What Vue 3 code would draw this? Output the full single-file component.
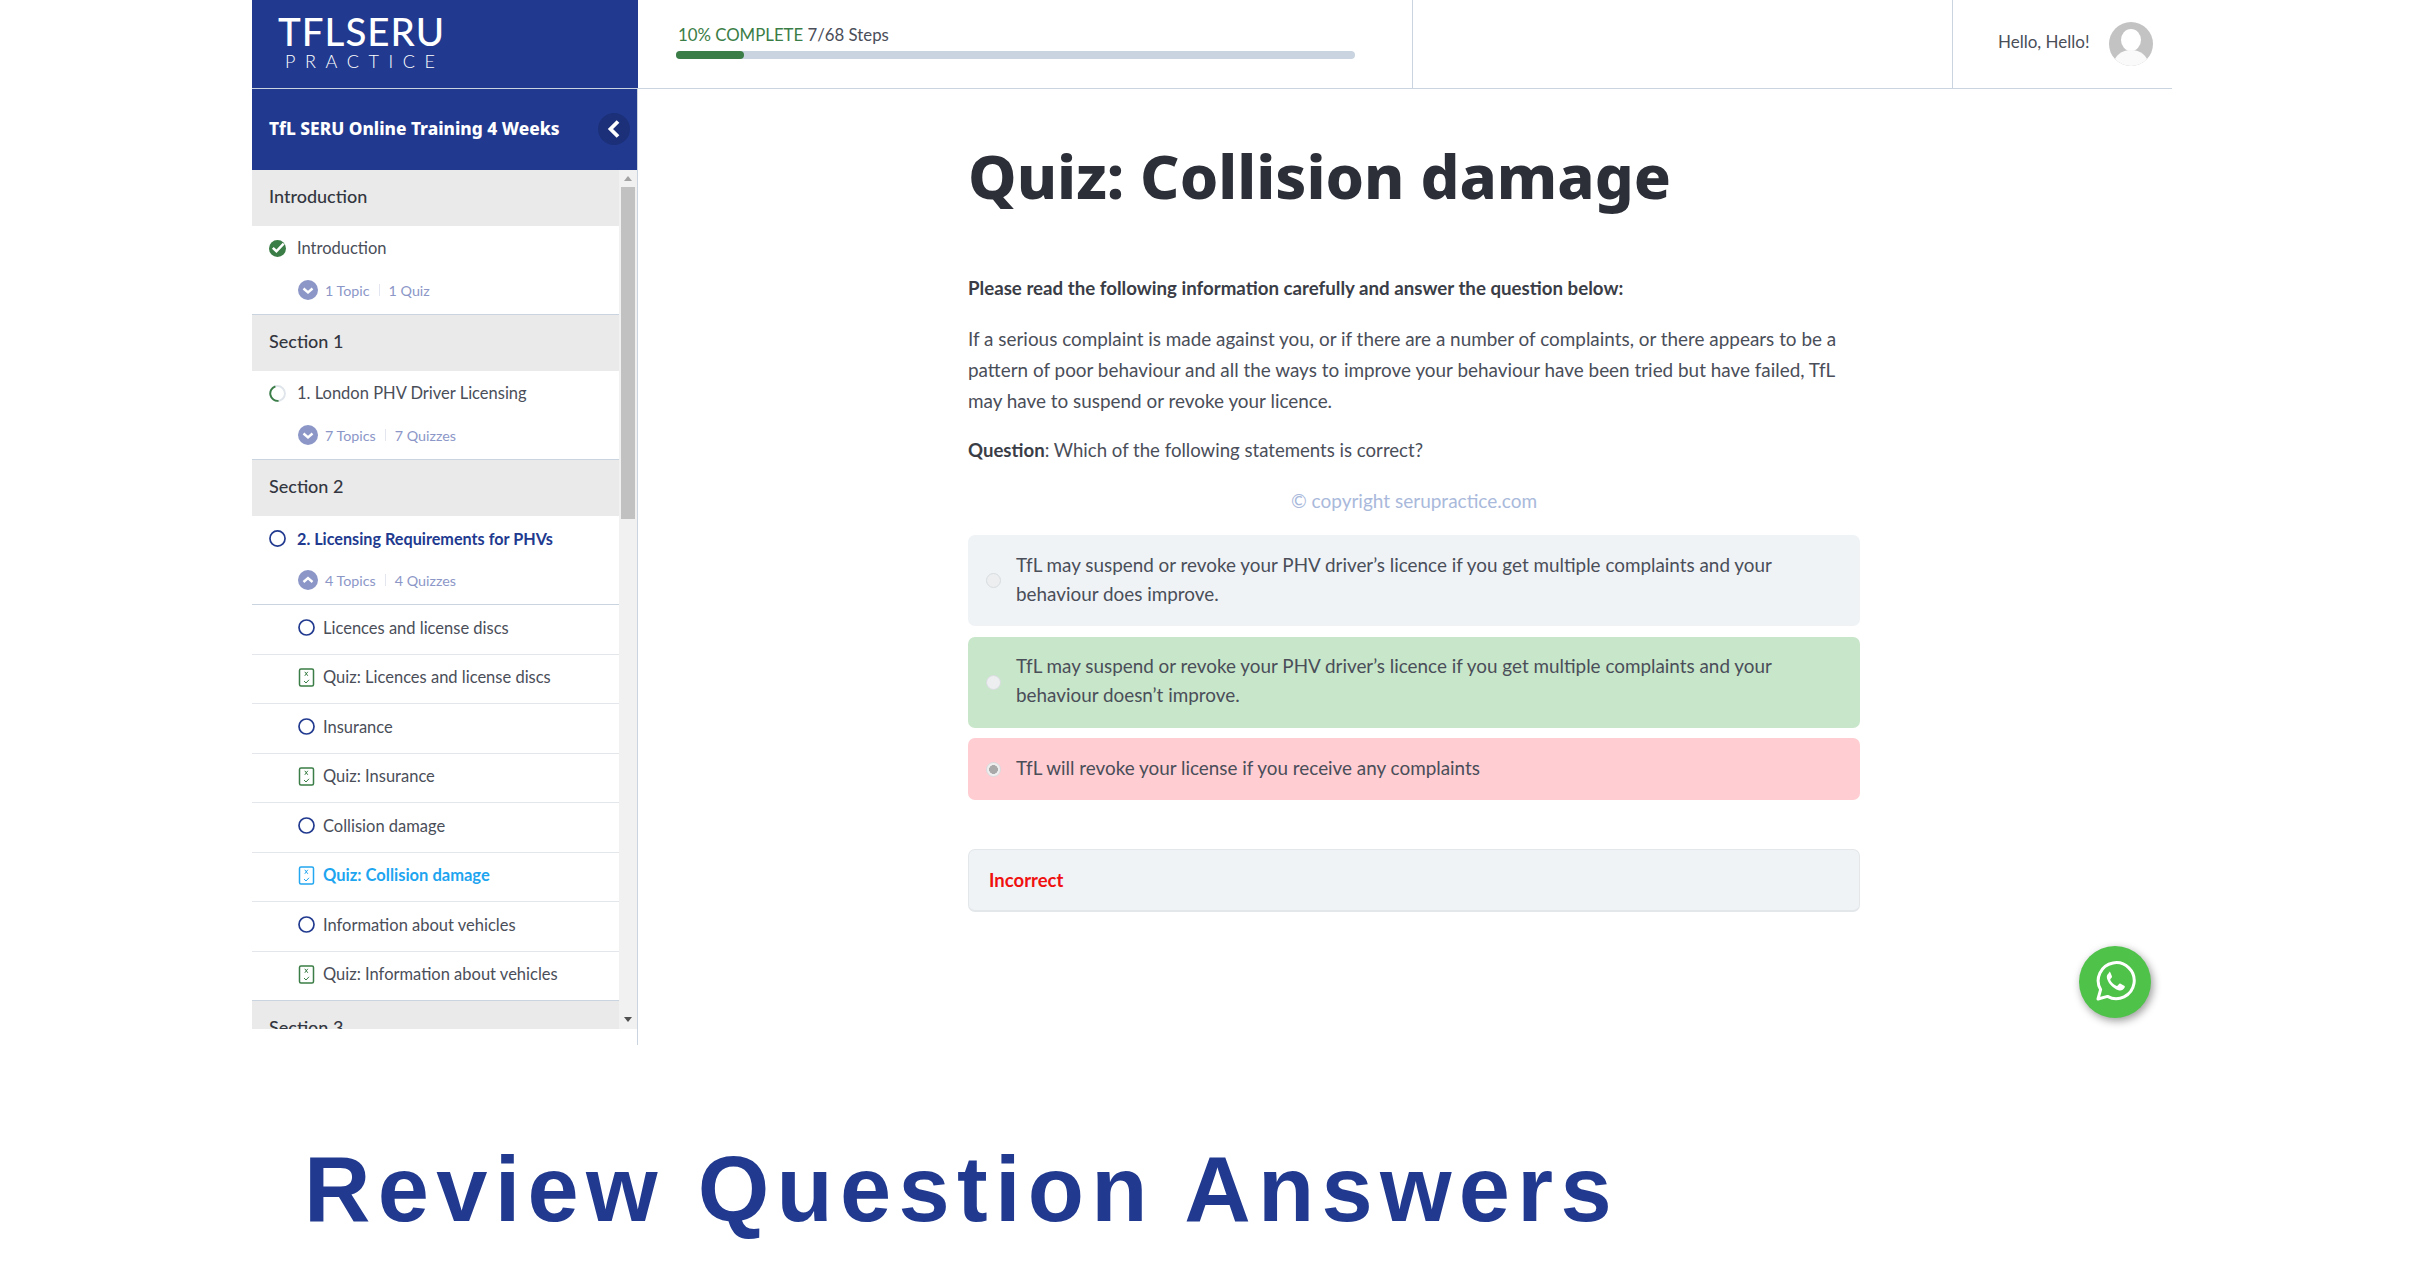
<script setup>
const sections = [
  {
    title: "Introduction",
    lessons: [{ name: "Introduction", status: "done", topics: "1 Topic", quizzes: "1 Quiz" }],
  },
  {
    title: "Section 1",
    lessons: [{ name: "1. London PHV Driver Licensing", status: "partial", topics: "7 Topics", quizzes: "7 Quizzes" }],
  },
  {
    title: "Section 2",
    lessons: [
      {
        name: "2. Licensing Requirements for PHVs",
        status: "open",
        active: true,
        topics: "4 Topics",
        quizzes: "4 Quizzes",
        items: [
          { name: "Licences and license discs", type: "topic" },
          { name: "Quiz: Licences and license discs", type: "quiz" },
          { name: "Insurance", type: "topic" },
          { name: "Quiz: Insurance", type: "quiz" },
          { name: "Collision damage", type: "topic" },
          { name: "Quiz: Collision damage", type: "quiz", current: true },
          { name: "Information about vehicles", type: "topic" },
          { name: "Quiz: Information about vehicles", type: "quiz" },
        ],
      },
    ],
  },
  { title: "Section 3", lessons: [] },
];

const answers = [
  { text: "TfL may suspend or revoke your PHV driver’s licence if you get multiple complaints and your behaviour does improve.", state: "" },
  { text: "TfL may suspend or revoke your PHV driver’s licence if you get multiple complaints and your behaviour doesn’t improve.", state: "correct" },
  { text: "TfL will revoke your license if you receive any complaints", state: "wrong" },
];
</script>

<template>
  <div class="page">
    <header class="topbar">
      <div class="logo">
        <div class="logo-main">TFLSERU</div>
        <div class="logo-sub">PRACTICE</div>
      </div>
      <div class="progress-col">
        <div class="progress-label"><span class="pct">10% COMPLETE</span> 7/68 Steps</div>
        <div class="progress-track"><div class="progress-fill"></div></div>
      </div>
      <div class="spacer-col"></div>
      <div class="user-col">
        <span class="hello">Hello, Hello!</span>
        <svg class="avatar" viewBox="0 0 44 44">
          <defs><clipPath id="av"><circle cx="22" cy="22" r="22" /></clipPath></defs>
          <g clip-path="url(#av)">
            <rect width="44" height="44" fill="#c3c3c3" />
            <ellipse cx="22" cy="18" rx="10" ry="11" fill="#fff" />
            <ellipse cx="22" cy="42" rx="17" ry="14" fill="#fafafa" />
          </g>
        </svg>
      </div>
    </header>

    <div class="body">
      <aside class="sidebar">
        <div class="side-head">
          <span>TfL SERU Online Training 4 Weeks</span>
          <span class="collapse">
            <svg width="16" height="20" viewBox="0 0 16 20"><path d="M12 2.500 4.500 10 12 17.500" fill="none" stroke="#fff" stroke-width="3.800" /></svg>
          </span>
        </div>
        <div class="side-scroll">
          <div class="side-list">
            <section v-for="s in sections" :key="s.title">
              <h3 class="sec-title">{{ s.title }}</h3>
              <div v-for="l in s.lessons" :key="l.name" class="lesson">
                <div class="lesson-row" :class="{ active: l.active }">
                  <svg v-if="l.status === 'done'" class="ico" viewBox="0 0 16 16">
                    <circle cx="8" cy="8" r="8" fill="#3b7d46" />
                    <path d="M3.600 7.400 7 10.600 13.800 3.400" fill="none" stroke="#fff" stroke-width="2.400" />
                  </svg>
                  <svg v-else-if="l.status === 'partial'" class="ico" viewBox="0 0 16 16">
                    <circle cx="8" cy="8" r="7" fill="none" stroke="#dfe5ea" stroke-width="1.800" />
                    <path d="M9 14.900A7 7 0 0 1 6 1.300" fill="none" stroke="#3b7d46" stroke-width="1.800" />
                  </svg>
                  <svg v-else class="ico" viewBox="0 0 16 16">
                    <circle cx="8" cy="8" r="7.100" fill="none" stroke="#213a8f" stroke-width="1.600" />
                  </svg>
                  <span>{{ l.name }}</span>
                </div>
                <div class="lesson-meta">
                  <svg class="chev" viewBox="0 0 20 20">
                    <circle cx="10" cy="10" r="10" fill="#8c97c8" />
                    <path :d="l.items ? 'M5.500 12 10 8l4.500 4' : 'M5.500 8.500 10 12.500l4.500-4'" fill="none" stroke="#fff" stroke-width="2.400" />
                  </svg>
                  <span>{{ l.topics }}</span>
                  <i class="sep"></i>
                  <span>{{ l.quizzes }}</span>
                </div>
                <div v-for="it in l.items" :key="it.name" class="item" :class="{ current: it.current }">
                  <svg v-if="it.type === 'topic'" class="ico-item" viewBox="0 0 17 19">
                    <circle cx="8.500" cy="9.500" r="7.500" fill="none" stroke="#213a8f" stroke-width="1.700" />
                  </svg>
                  <svg v-else class="ico-item" viewBox="0 0 17 19">
                    <rect x="1.500" y="1" width="14" height="17" rx="1.500" fill="none" :stroke="it.current ? '#22a7f0' : '#3b7d46'" stroke-width="1.500" />
                    <path d="M6.800 3.800 9.800 7.800M9.800 3.800 6.800 7.800M6 13 8 15 11 11.800" fill="none" :stroke="it.current ? '#22a7f0' : '#3b7d46'" stroke-width="1" />
                  </svg>
                  <span>{{ it.name }}</span>
                </div>
              </div>
            </section>
          </div>
          <div class="scrollbar">
            <span class="arrow up"></span>
            <div class="thumb"></div>
            <span class="arrow down"></span>
          </div>
        </div>
      </aside>

      <main class="content">
        <h1>Quiz: Collision damage</h1>
        <p class="lead">Please read the following information carefully and answer the question below:</p>
        <p class="para">If a serious complaint is made against you, or if there are a number of complaints, or there appears to be a pattern of poor behaviour and all the ways to improve your behaviour have been tried but have failed, TfL may have to suspend or revoke your licence.</p>
        <p class="question"><strong>Question</strong>: Which of the following statements is correct?</p>
        <p class="copy">© copyright serupractice.com</p>
        <ul class="answers">
          <li v-for="a in answers" :key="a.text" class="answer" :class="a.state">
            <span class="radio"></span>
            <span class="answer-text">{{ a.text }}</span>
          </li>
        </ul>
        <div class="result">Incorrect</div>
      </main>
    </div>

    <h2 class="caption">Review Question Answers</h2>

    <a class="whatsapp">
      <svg width="44" height="44" viewBox="0 0 44 44">
        <path d="M5 39 7.600 29.600A18 18 0 1 1 14.500 36.400Z" fill="none" stroke="#fff" stroke-width="3" stroke-linejoin="round" />
        <path d="M16.500 12.500c-2 1.300-3.200 3.500-2.500 6 1.400 5 6 10 11.500 11.700 2.500.800 5-.300 6-2.400.500-1 .400-1.700-.300-2.100l-3.600-1.900c-.800-.400-1.300-.200-1.800.400l-1 1.300c-.400.500-.900.600-1.500.300-2.600-1.200-4.600-3.100-5.900-5.600-.300-.600-.200-1 .200-1.400l1-1.100c.400-.500.500-1 .300-1.500l-1.500-3.600c-.400-.900-1.100-1.100-1.900-.600Z" fill="#fff" />
      </svg>
    </a>
  </div>
</template>

<style>
html, body { background: #fff; }
</style>

<style scoped>
.page {
  position: relative;
  width: 1920px;
  height: 1274px;
  margin-left: 252px;
  font-family: Lato, "Liberation Sans", sans-serif;
  color: #4a4e59;
  overflow: hidden;
}
.topbar {
  display: flex;
  height: 89px;
  border-bottom: 1px solid #c9d4e0;
  box-sizing: border-box;
}
.logo {
  width: 386px;
  background: #213a8f;
  color: #fff;
  padding: 11px 0 0 26px;
  box-sizing: border-box;
  line-height: 1;
}
.logo-main { font-size: 38.500px; font-weight: 500; letter-spacing: 1px; line-height: 40px; }
.logo-sub { font-size: 18px; letter-spacing: 9.600px; margin: 0 0 0 7px; line-height: 20px; font-weight: 300; }
.progress-col {
  width: 775px;
  padding: 24px 0 0 38px;
  box-sizing: border-box;
  border-right: 1px solid #c9d4e0;
}
.progress-label { font-size: 16.800px; line-height: 22px; margin-left: 2px; }
.pct { color: #3b7d46; }
.progress-track {
  width: 679px;
  height: 8px;
  margin-top: 5px;
  background: #c9d4e0;
  border-radius: 4px;
}
.progress-fill { width: 68px; height: 100%; background: #3b7d46; border-radius: 4px; }
.spacer-col { width: 539px; border-right: 1px solid #c9d4e0; }
.user-col {
  flex: 1;
  display: flex;
  align-items: center;
  gap: 19px;
  padding-left: 45px;
  font-size: 17px;
}
.hello { margin-bottom: 5px; }
.avatar { width: 44px; height: 44px; margin-bottom: 1px; }
.body { display: flex; height: 956px; }
.sidebar {
  width: 386px;
  box-sizing: border-box;
  border-right: 1px solid #c9d4e0;
  display: flex;
  flex-direction: column;
}
.side-head {
  height: 81px;
  flex: none;
  background: #213a8f;
  color: #fff;
  font-family: "Noto Sans", sans-serif;
  font-weight: 800;
  font-size: 17.300px;
  display: flex;
  align-items: center;
  justify-content: space-between;
  padding: 0 7px 2px 17px;
  box-sizing: border-box;
}
.collapse {
  width: 32px;
  height: 32px;
  border-radius: 50%;
  background: #1c3079;
  display: flex;
  align-items: center;
  justify-content: center;
}
.side-scroll { height: 859px; display: flex; flex: none; }
.side-list { width: 367px; overflow: hidden; }
.sec-title {
  margin: 0;
  height: 56px;
  line-height: 52px;
  background: #eaeaea;
  padding-left: 17px;
  font-size: 18px;
  font-weight: 500;
  color: #33363f;
  box-sizing: border-box;
}
.lesson-row {
  display: flex;
  align-items: center;
  height: 46px;
  padding: 0 0 2px 17px;
  box-sizing: border-box;
  font-size: 16.500px;
  gap: 11px;
}
.lesson-row.active { color: #213a8f; font-weight: 700; font-size: 16.200px; }
.ico { width: 17px; height: 17px; flex: none; }
.lesson-meta {
  display: flex;
  align-items: center;
  height: 43px;
  padding: 0 0 6px 46px;
  box-sizing: border-box;
  font-size: 14.300px;
  color: #8c97c8;
  border-bottom: 1px solid #c9d4e0;
}
.chev { width: 20px; height: 20px; margin-right: 7px; }
.sep { width: 1px; height: 12px; background: #e3e6ee; margin: 0 9px; }
.item {
  display: flex;
  align-items: center;
  height: 49.500px;
  padding: 0 0 3px 46px;
  box-sizing: border-box;
  border-bottom: 1px solid #e3e6ea;
  font-size: 16.500px;
  gap: 8px;
}
.item:last-child { border-bottom-color: #c9d4e0; }
.item.current { color: #1ea5f0; font-weight: 700; }
.ico-item { width: 17px; height: 19px; flex: none; }
.scrollbar {
  width: 18px;
  background: #f1f1f1;
  position: relative;
  display: flex;
  flex-direction: column;
  align-items: center;
  flex: none;
}
.thumb { width: 14px; height: 332px; background: #c1c1c1; margin-top: 17px; }
.arrow { position: absolute; width: 0; height: 0; border-left: 4px solid transparent; border-right: 4px solid transparent; }
.arrow.up { top: 6px; border-bottom: 5px solid #a3a3a3; }
.arrow.down { bottom: 7px; border-top: 5px solid #505050; }
.content { width: 892px; margin-left: 330px; }
h1 {
  margin: 46px 0 0;
  font-family: "Noto Sans", sans-serif;
  font-size: 61.300px;
  line-height: 80px;
  font-weight: 800;
  color: #2c2f38;
}
.lead { margin: 58px 0 0; font-size: 18.700px; font-weight: 700; line-height: 31px; color: #3a3d46; }
.para { margin: 19px 0 0; font-size: 18.900px; line-height: 31px; }
.question { margin: 19px 0 0; font-size: 18.600px; line-height: 31px; }
.question strong { color: #3a3d46; }
.copy { margin: 19px 0 0; font-size: 19px; line-height: 31px; text-align: center; color: #a9b9db; }
.answers { list-style: none; margin: 19px 0 0; padding: 0; display: flex; flex-direction: column; gap: 10.500px; }
.answer {
  position: relative;
  background: #eff3f6;
  border-radius: 7px;
  padding: 14.500px 50px 18.500px 48px;
  font-size: 18.880px;
  line-height: 29px;
}
.answer.correct { background: #c8e6c9; }
.answer.wrong { background: #ffcdd2; }
.radio {
  position: absolute;
  left: 18px;
  top: 50%;
  width: 15px;
  height: 15px;
  margin-top: -7.500px;
  border-radius: 50%;
  background: #eceef0;
  border: 1px solid #d8dcdf;
  box-sizing: border-box;
}
.wrong .radio { background: radial-gradient(circle, #a9a9a9 45%, #eeeeee 50%); }
.result {
  margin-top: 49px;
  height: 63px;
  line-height: 60px;
  box-sizing: border-box;
  background: #eff3f6;
  border: 1px solid #e3e7ea;
  border-bottom-width: 2px;
  border-radius: 7px;
  padding-left: 20px;
  font-size: 18.500px;
  font-weight: 700;
  color: #f01010;
}
.caption {
  margin: 0;
  padding: 0 0 0 52px;
  margin-top: 94px;
  font-family: "Liberation Sans", sans-serif;
  font-size: 92px;
  line-height: 100px;
  letter-spacing: 7.300px;
  font-weight: 700;
  color: #213a8f;
  white-space: nowrap;
}
.whatsapp {
  position: absolute;
  left: 1827px;
  top: 946px;
  width: 72px;
  height: 72px;
  border-radius: 50%;
  background: #4fc24a;
  box-shadow: 2px 3px 8px rgba(0, 0, 0, 0.4);
  display: flex;
  align-items: center;
  justify-content: center;
}
</style>
